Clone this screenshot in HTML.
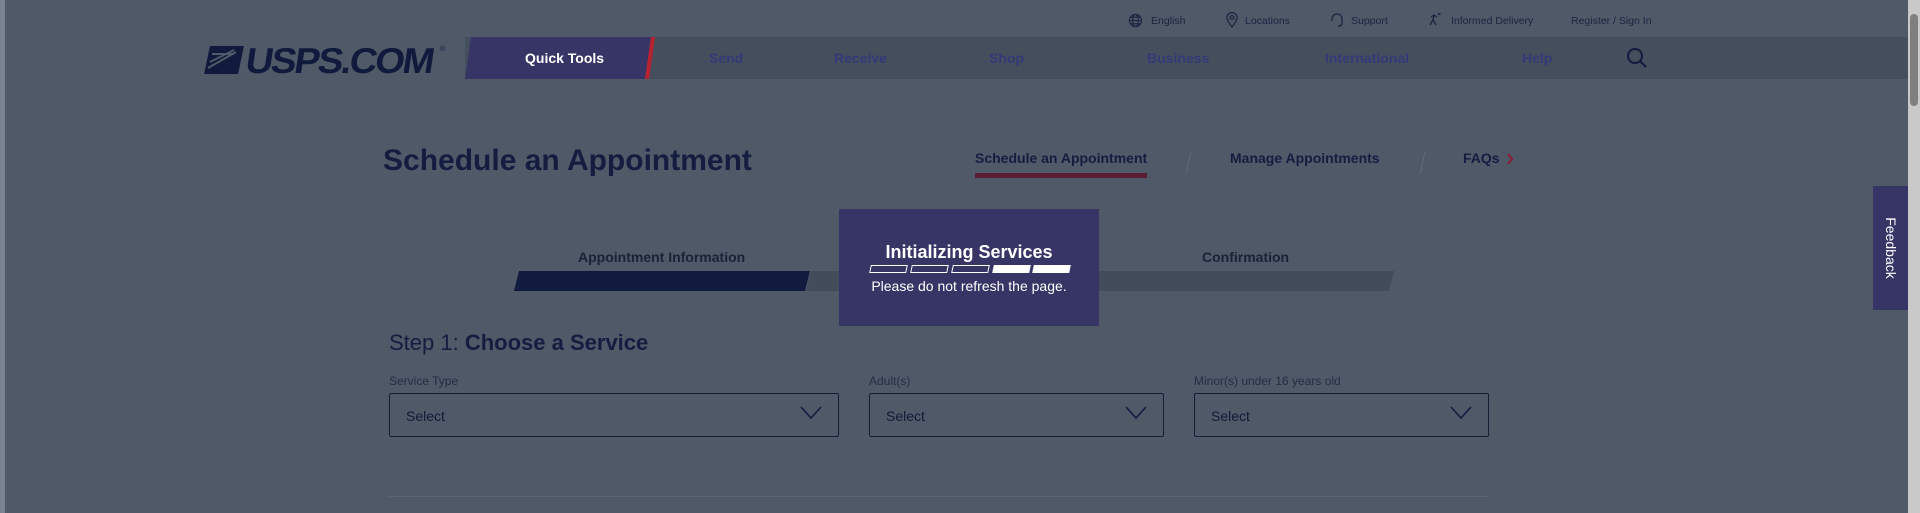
<!DOCTYPE html>
<html><head><meta charset="utf-8"><style>
*{margin:0;padding:0;box-sizing:border-box}
body{width:1920px;height:513px;overflow:hidden;background:#4f5968;font-family:"Liberation Sans",Arial,sans-serif;position:relative}
.a{position:absolute;white-space:nowrap}
.util{top:15px;font-size:10.5px;color:#1c2340;}
.nav{top:37px;left:465px;width:1443px;height:42px;background:#454e5c}
.ni{top:50px;font-size:14px;font-weight:bold;color:#343a78}
.sel{top:393px;height:44px;border:1px solid #151c36;border-radius:2px}
.sel span{position:absolute;left:16px;top:14px;font-size:14px;color:#121a35}
.sel svg{position:absolute;right:16px;top:12px}
.lbl{top:374px;font-size:12px;color:#262d45}
</style></head><body>
<div class="a" style="left:0;top:0;width:5px;height:513px;background:#7a8290"></div>
<div class="a" style="left:1908px;top:0;width:12px;height:513px;background:#c9c9c9"></div>
<div class="a" style="left:1910px;top:14px;width:8px;height:92px;background:#7f7f7f;border-radius:4px"></div>

<!-- utility -->
<svg class="a" style="left:1128px;top:13px" width="15" height="15" viewBox="0 0 16 16" fill="none" stroke="#1c2340" stroke-width="1.2"><circle cx="8" cy="8" r="6.5"/><ellipse cx="8" cy="8" rx="3" ry="6.5"/><path d="M1.5 8h13M2.5 4.5h11M2.5 11.5h11"/></svg>
<div class="a util" style="left:1151px">English</div>
<svg class="a" style="left:1226px;top:12px" width="12" height="16" viewBox="0 0 12 16" fill="none" stroke="#1c2340" stroke-width="1.2"><path d="M6 15C3 11 1 8 1 5.5a5 5 0 0110 0C11 8 9 11 6 15z"/><circle cx="6" cy="5.5" r="1.8"/></svg>
<div class="a util" style="left:1245px">Locations</div>
<svg class="a" style="left:1330px;top:12px" width="14" height="16" viewBox="0 0 14 16" fill="none" stroke="#1c2340" stroke-width="1.3"><path d="M2 9V7a5 5 0 0110 0v2M12 9v2a3 3 0 01-3 3H8"/></svg>
<div class="a util" style="left:1351px">Support</div>
<svg class="a" style="left:1427px;top:11px" width="16" height="16" viewBox="0 0 16 16" fill="none" stroke="#1c2340" stroke-width="1.3"><path d="M7 4l-1 5-3 5M6 9l3 5M4 6l3-2 3 2M11 2l1 1.5 1.5-1"/></svg>
<div class="a util" style="left:1451px">Informed Delivery</div>
<div class="a util" style="left:1571px">Register / Sign In</div>

<!-- logo -->
<svg class="a" style="left:204px;top:46px" width="40" height="28" viewBox="0 0 40 28"><path d="M6 0H40L34 28H0z" fill="#101a3d"/><path d="M4 22L32 6M8 8h22M6 16L30 4" stroke="#4f5968" stroke-width="2"/></svg>
<div class="a" style="left:246px;top:40px;font-size:36px;font-weight:bold;color:#101a3d;letter-spacing:-2px;transform:scaleX(1.06) skewX(-8deg);transform-origin:left">USPS.COM</div>
<div class="a" style="left:440px;top:46px;font-size:7px;color:#101a3d">®</div>

<!-- nav -->
<div class="a nav"></div>
<div class="a" style="left:465px;top:37px;width:186px;height:42px;background:#363566;clip-path:polygon(6px 0,186px 0,180px 42px,0 42px)"></div>
<div class="a" style="left:645px;top:37px;width:10px;height:42px;background:#b8222f;clip-path:polygon(6px 0,10px 0,4px 42px,0 42px)"></div>
<div class="a" style="left:525px;top:50px;font-size:14px;font-weight:bold;color:#fff">Quick Tools</div>
<div class="a ni" style="left:709px">Send</div>
<div class="a ni" style="left:834px">Receive</div>
<div class="a ni" style="left:989px">Shop</div>
<div class="a ni" style="left:1147px">Business</div>
<div class="a ni" style="left:1325px">International</div>
<div class="a ni" style="left:1522px">Help</div>
<svg class="a" style="left:1626px;top:47px" width="22" height="22" viewBox="0 0 22 22" fill="none" stroke="#101a3d" stroke-width="2"><circle cx="9" cy="9" r="7"/><path d="M14 14l6 6"/></svg>

<!-- heading -->
<div class="a" style="left:383px;top:144px;font-size:30px;font-weight:bold;color:#141d40">Schedule an Appointment</div>
<div class="a" style="left:975px;top:150px;font-size:14px;font-weight:bold;color:#141d40">Schedule an Appointment</div>
<div class="a" style="left:975px;top:173px;width:172px;height:5px;background:#5a1d36"></div>
<div class="a" style="left:1188px;top:152px;width:1px;height:22px;background:#626a78;transform:skewX(-12deg)"></div>
<div class="a" style="left:1230px;top:150px;font-size:14px;font-weight:bold;color:#141d40">Manage Appointments</div>
<div class="a" style="left:1422px;top:152px;width:1px;height:22px;background:#626a78;transform:skewX(-12deg)"></div>
<div class="a" style="left:1463px;top:150px;font-size:14px;font-weight:bold;color:#141d40">FAQs</div>
<svg class="a" style="left:1506px;top:153px" width="8" height="12" viewBox="0 0 8 12" fill="none" stroke="#8b1d34" stroke-width="2"><path d="M2 1l4 5-4 5"/></svg>

<!-- progress -->
<div class="a" style="left:578px;top:249px;font-size:14px;font-weight:bold;color:#1a2238">Appointment Information</div>
<div class="a" style="left:1202px;top:249px;font-size:14px;font-weight:bold;color:#1a2238">Confirmation</div>
<div class="a" style="left:514px;top:271px;width:296px;height:20px;background:#101b3d;clip-path:polygon(5px 0,296px 0,291px 20px,0 20px)"></div>
<div class="a" style="left:806px;top:271px;width:588px;height:20px;background:#434c5a;clip-path:polygon(5px 0,588px 0,583px 20px,0 20px)"></div>

<!-- modal -->
<div class="a" style="left:839px;top:209px;width:260px;height:117px;background:#363566"></div>
<div class="a" style="left:839px;top:242px;width:260px;text-align:center;font-size:18px;font-weight:bold;color:#fff">Initializing Services</div>
<div class="a" style="left:870px;top:265px;width:200px;height:8px">
<div class="a" style="left:0;width:37px;height:8px;border:1px solid #fff;transform:skewX(-12deg)"></div>
<div class="a" style="left:41px;width:37px;height:8px;border:1px solid #fff;transform:skewX(-12deg)"></div>
<div class="a" style="left:82px;width:37px;height:8px;border:1px solid #fff;transform:skewX(-12deg)"></div>
<div class="a" style="left:123px;width:37px;height:8px;background:#fff;transform:skewX(-12deg)"></div>
<div class="a" style="left:163px;width:37px;height:8px;background:#fff;transform:skewX(-12deg)"></div>
</div>
<div class="a" style="left:839px;top:278px;width:260px;text-align:center;font-size:14px;color:#fff">Please do not refresh the page.</div>

<!-- step -->
<div class="a" style="left:389px;top:330px;font-size:22px;color:#141d40">Step 1: <b>Choose a Service</b></div>
<div class="a lbl" style="left:389px">Service Type</div>
<div class="a lbl" style="left:869px">Adult(s)</div>
<div class="a lbl" style="left:1194px">Minor(s) under 16 years old</div>
<div class="a sel" style="left:389px;width:450px"><span>Select</span><svg width="22" height="14" viewBox="0 0 22 14" fill="none" stroke="#141d40" stroke-width="1.6"><path d="M1 1l10 11L21 1"/></svg></div>
<div class="a sel" style="left:869px;width:295px"><span>Select</span><svg width="22" height="14" viewBox="0 0 22 14" fill="none" stroke="#141d40" stroke-width="1.6"><path d="M1 1l10 11L21 1"/></svg></div>
<div class="a sel" style="left:1194px;width:295px"><span>Select</span><svg width="22" height="14" viewBox="0 0 22 14" fill="none" stroke="#141d40" stroke-width="1.6"><path d="M1 1l10 11L21 1"/></svg></div>
<div class="a" style="left:389px;top:496px;width:1100px;height:1px;background:#5c6574"></div>

<!-- feedback -->
<div class="a" style="left:1873px;top:186px;width:35px;height:124px;background:#363566"></div>
<div class="a" style="left:1891px;top:248px;font-size:14px;color:#fff;transform:translate(-50%,-50%) rotate(90deg)">Feedback</div>
</body></html>
